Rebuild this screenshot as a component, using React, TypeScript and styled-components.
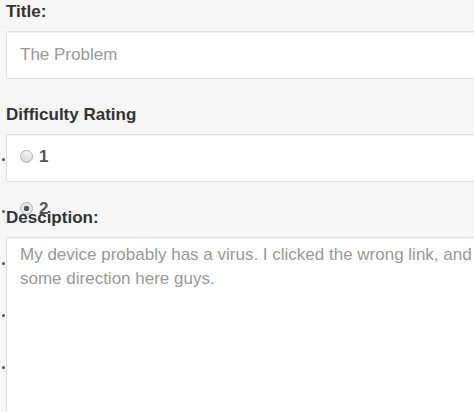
import styled, { createGlobalStyle } from 'styled-components';

const GlobalStyle = createGlobalStyle`
  html, body {
    margin: 0;
    padding: 0;
    overflow: hidden;
    background: #f6f6f6;
  }

  body {
    font-family: "Liberation Sans", Arial, sans-serif;
    color: #333;
  }
`;

const Form = styled.form`
  width: 588px;
  padding: 2px 0 0 6px;
`;

const Group = styled.div`
  margin-bottom: 26px;
`;

const Label = styled.label`
  display: block;
  font-size: 17px;
  font-weight: bold;
  line-height: 20px;
  margin-bottom: 9px;
  color: #333;
`;

const TextInput = styled.input`
  display: block;
  box-sizing: border-box;
  width: 100%;
  height: 48px;
  margin: 0;
  padding: 0 13px;
  font-family: "Liberation Sans", Arial, sans-serif;
  font-size: 17px;
  color: #555;
  background: #fff;
  border: 1px solid #e0e0e0;
  border-radius: 2px;
  box-shadow: inset 0 1px 1px rgba(0, 0, 0, 0.05);

  &::placeholder {
    color: #999;
  }
`;

const RatingBox = styled.div`
  box-sizing: border-box;
  height: 48px;
  background: #fff;
  border: 1px solid #e0e0e0;
  border-radius: 2px;
  box-shadow: inset 0 1px 1px rgba(0, 0, 0, 0.05);
`;

const RatingList = styled.ul`
  margin: 0;
  padding: 0 0 0 8px;
  list-style: disc;
`;

const RatingItem = styled.li`
  padding: 12px 0 20px;
  line-height: 20px;

  &::marker {
    font-size: 11px;
    color: #555;
  }
`;

const Radio = styled.input`
  appearance: none;
  box-sizing: border-box;
  width: 13px;
  height: 13px;
  margin: 3px 6px 0 5px;
  border: 1px solid #b0b0b0;
  border-radius: 50%;
  background: linear-gradient(#f4f4f4, #d8d8d8);
  vertical-align: -1px;

  &:checked {
    background: radial-gradient(circle, #555 0 2.5px, #e6e6e6 3px);
  }
`;

const RadioLabel = styled.label`
  font-size: 17px;
  font-weight: bold;
  color: #555;
`;

const TextArea = styled.textarea`
  display: block;
  position: relative;
  box-sizing: border-box;
  width: 100%;
  height: 220px;
  margin: 0;
  padding: 5px 13px;
  font-family: "Liberation Sans", Arial, sans-serif;
  font-size: 17px;
  line-height: 24.3px;
  color: #555;
  background: #fff;
  border: 1px solid #e0e0e0;
  border-radius: 2px;
  box-shadow: inset 0 1px 1px rgba(0, 0, 0, 0.05);
  resize: none;

  &::placeholder {
    color: #999;
  }
`;

const ratings = [1, 2, 3, 4, 5];

export default function App() {
  return (
    <>
      <GlobalStyle />
      <Form>
        <Group>
          <Label htmlFor="title">Title:</Label>
          <TextInput id="title" type="text" placeholder="The Problem" />
        </Group>

        <Group>
          <Label>Difficulty Rating</Label>
          <RatingBox>
            <RatingList>
              {ratings.map((r) => (
                <RatingItem key={r}>
                  <Radio
                    type="radio"
                    name="difficulty"
                    id={`rating-${r}`}
                    defaultChecked={r === 2}
                  />
                  <RadioLabel htmlFor={`rating-${r}`}>{r}</RadioLabel>
                </RatingItem>
              ))}
            </RatingList>
          </RatingBox>
        </Group>

        <Group>
          <Label htmlFor="description">Desciption:</Label>
          <TextArea
            id="description"
            placeholder="My device probably has a virus. I clicked the wrong link, and now I need some direction here guys."
          />
        </Group>
      </Form>
    </>
  );
}
